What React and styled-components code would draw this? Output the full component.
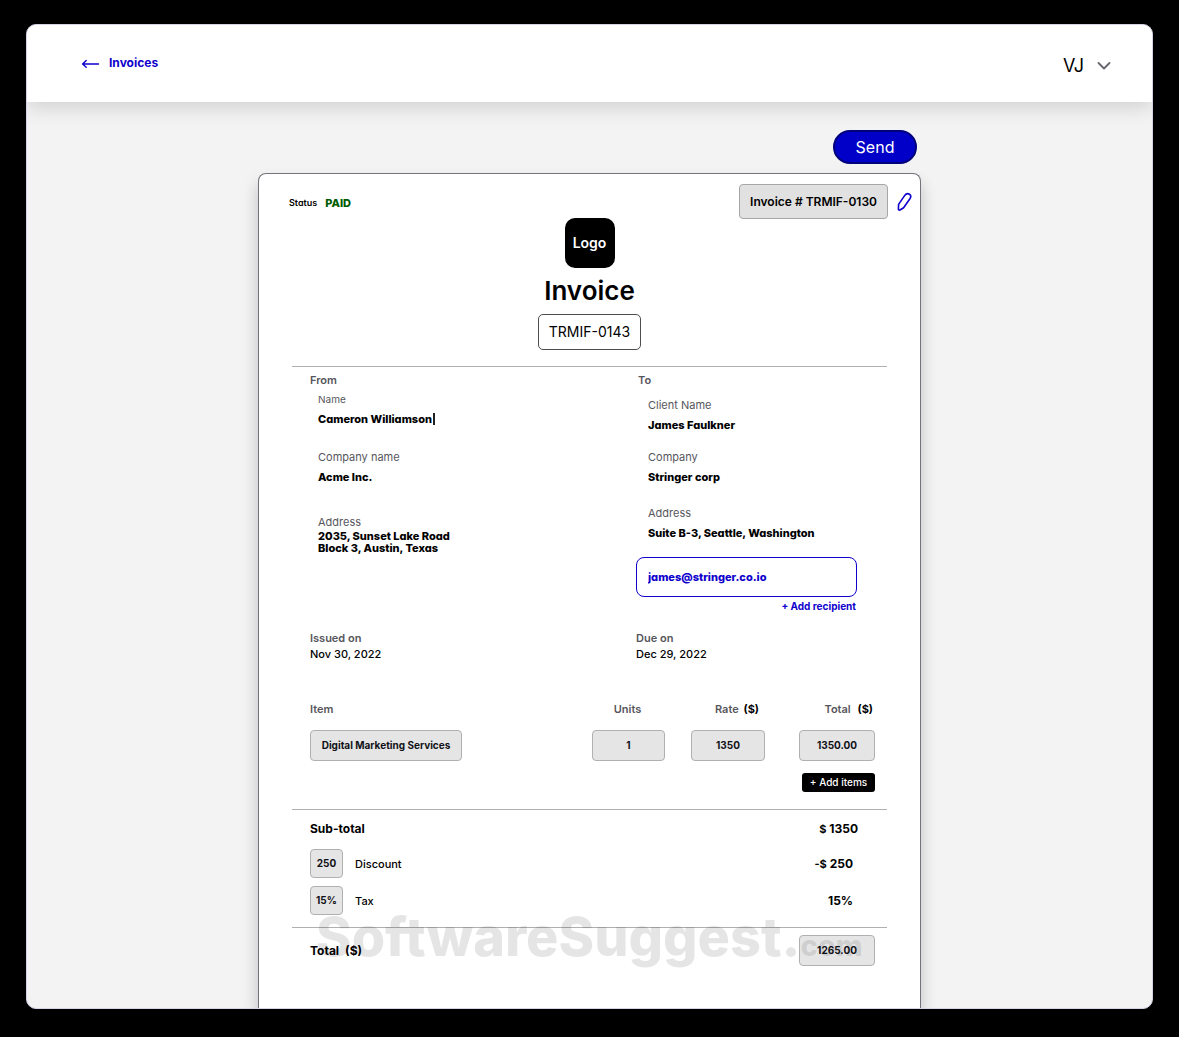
import styled, { createGlobalStyle, css } from "styled-components";

const GlobalStyle = createGlobalStyle`
  * {
    box-sizing: border-box;
  }

  body {
    margin: 0;
    background: #000;
    color: #000;
    font-family: Inter, "Liberation Sans", sans-serif;
    font-size: 11px;
    line-height: 14px;
  }

  button,
  input {
    font-family: inherit;
  }
`;

const blue = "#0f00cc";
const grey = "#56565c";

const Page = styled.div`
  min-height: 100vh;
  display: flex;
  padding: 24px 26px 28px;
`;

const Window = styled.div`
  flex: 1;
  min-width: 0;
  display: flex;
  flex-direction: column;
  overflow: hidden;
  border: 1px solid #d3d3e6;
  border-radius: 10px;
  background: #f3f3f3;
`;

const TopBar = styled.header`
  display: flex;
  align-items: center;
  justify-content: space-between;
  height: 77px;
  padding: 0 40px 0 54px;
  background: #fff;
  box-shadow: 0 4px 20px rgba(0, 0, 0, 0.16);
`;

const BackLink = styled.a`
  display: flex;
  align-items: center;
  gap: 9px;
  padding-bottom: 2px;
  color: ${blue};
  font-size: 12px;
  font-weight: 700;
  text-decoration: none;
`;

const UserMenu = styled.button`
  display: flex;
  align-items: center;
  gap: 12px;
  padding: 4px 0 0;
  border: 0;
  background: none;
  font-size: 18px;
  line-height: 22px;
  color: #000;
`;

const Actions = styled.div`
  display: flex;
  justify-content: flex-end;
  width: 100%;
  max-width: 663px;
  margin: 28px auto 9px;
  padding-right: 4px;
`;

const SendButton = styled.button`
  width: 84px;
  height: 34px;
  border: 2px solid #00007c;
  border-radius: 17px;
  background: #0000c8;
  color: #fff;
  font-size: 16px;
`;

const Sheet = styled.main`
  flex: 1;
  width: 100%;
  max-width: 663px;
  margin: 0 auto;
  border: 1px solid #73737c;
  border-bottom: 0;
  border-radius: 8px 8px 0 0;
  background: #fff;
  box-shadow: 0 10px 16px rgba(0, 0, 0, 0.22);
`;

const SheetTop = styled.div`
  display: flex;
  justify-content: space-between;
  align-items: flex-start;
  height: 44px;
  padding: 10px 8px 0 30px;
`;

const Status = styled.div`
  display: flex;
  gap: 8px;
  padding-top: 12px;
  font-size: 9px;
  font-weight: 600;
  font-feature-settings: "cv11";

  strong {
    color: #005c00;
    font-size: 11px;
    font-weight: 800;
  }
`;

const NumberGroup = styled.div`
  display: flex;
  align-items: center;
  gap: 8px;
`;

const NumberTag = styled.div`
  padding: 9px 10px;
  border: 1px solid #a6a6a6;
  border-radius: 4px;
  background: #e1e1e1;
  font-size: 12px;
  line-height: 15px;
  font-weight: 600;
`;

const IconButton = styled.button`
  display: flex;
  padding: 0;
  border: 0;
  background: none;
`;

const Heading = styled.div`
  display: flex;
  flex-direction: column;
  align-items: center;
  padding-bottom: 16px;
`;

const Logo = styled.div`
  display: grid;
  place-items: center;
  width: 50px;
  height: 50px;
  border-radius: 10px;
  background: #000;
  color: #fff;
  font-size: 14px;
  font-weight: 600;
`;

const Title = styled.h1`
  margin: 0;
  font-size: 26px;
  line-height: 46px;
  font-weight: 600;
`;

const NumberInput = styled.input`
  width: 103px;
  height: 36px;
  padding: 0 0 2px;
  border: 1px solid #4d4d52;
  border-radius: 5px;
  background: #fff;
  text-align: center;
  font-size: 14px;
`;

const Body = styled.div`
  margin: 0 33px;
`;

const Section = styled.section`
  position: relative;
  padding: 6px 12px 0 18px;
  border-top: 1px solid #b0b0b0;
`;

const Columns = styled.div`
  display: grid;
  grid-template-columns: 326fr 239fr;
`;

const Caption = styled.h2`
  margin: 0;
  padding-left: ${(p) => (p.$inset ? "2px" : 0)};
  color: ${grey};
  font-size: 11px;
  line-height: 14px;
  font-weight: 600;
`;

const Party = styled.div`
  padding-left: ${(p) => (p.$to ? "12px" : "8px")};
`;

const Field = styled.div`
  display: flex;
  flex-direction: column;
  gap: ${(p) => (p.$tight ? "1px" : "6px")};
  margin-top: ${(p) => p.$top}px;
`;

const FieldLabel = styled.span`
  color: ${grey};
  ${(p) =>
    p.$clipped &&
    css`
      font-size: 10px;
      clip-path: inset(4px 0 0);
    `}
`;

const FieldValue = styled.span`
  font-weight: 800;
  font-feature-settings: "cv11";
  line-height: ${(p) => (p.$lines ? "12px" : "14px")};
  white-space: pre-line;
`;

const Caret = styled.i`
  display: inline-block;
  width: 2px;
  height: 12px;
  margin-left: 1px;
  background: #222;
  vertical-align: -2px;
`;

const EmailInput = styled.input`
  width: 221px;
  height: 40px;
  margin-top: 17px;
  padding: 0 11px;
  border: 1px solid ${blue};
  border-radius: 8px;
  background: #fff;
  color: ${blue};
  font-size: 11px;
  font-weight: 800;
  font-feature-settings: "cv11";
`;

const AddRecipient = styled.button`
  display: block;
  width: 220px;
  margin-top: 2px;
  padding: 0;
  border: 0;
  background: none;
  color: ${blue};
  text-align: right;
  font-size: 10px;
  line-height: 14px;
  font-weight: 700;
`;

const Dates = styled(Columns)`
  margin-top: 18px;
`;

const DateValue = styled.div`
  margin-top: 2px;
  font-weight: 500;
`;

const Items = styled.table`
  width: 100%;
  margin-top: 41px;
  border-collapse: collapse;
  table-layout: fixed;

  th,
  td {
    padding: 0;
    text-align: left;
  }
`;

const Head = styled.th`
  width: ${(p) => p.$width};
  color: ${grey};
  font-weight: 600;

  div {
    padding: ${(p) => p.$pad || "0"};
    margin-bottom: 14px;
    text-align: ${(p) => p.$align || "left"};
  }

  b {
    margin-left: ${(p) => p.$gap || "2px"};
    color: #000;
    font-weight: 700;
  }
`;

const BoxInput = styled.input`
  display: block;
  width: ${(p) => p.$w}px;
  height: ${(p) => (p.$small ? "29px" : "31px")};
  padding: 0 0 2px;
  border: 1px solid #b0b0b0;
  border-radius: 4px;
  background: #e5e5e5;
  color: #111118;
  text-align: center;
  font-size: 10px;
  font-weight: 700;
`;

const AddItems = styled.button`
  display: block;
  width: 73px;
  height: 19px;
  margin: 12px 0 17px auto;
  padding: 0 0 2px;
  border: 0;
  border-radius: 3px;
  background: #000;
  color: #fff;
  font-size: 10px;
  font-weight: 500;
`;

const SumRow = styled.div`
  display: flex;
  align-items: center;
  margin-top: ${(p) => p.$top || 0}px;
  font-size: ${(p) => (p.$strong ? "12px" : "11px")};
  line-height: 16px;
  font-weight: ${(p) => (p.$strong ? 700 : 500)};

  label {
    margin-left: 12px;
  }
`;

const Amount = styled.span`
  margin-left: auto;
  padding-right: ${(p) => p.$right}px;
  font-size: 12px;
  font-weight: 700;

  small {
    font-size: 11px;
  }
`;

const Currency = styled.span`
  margin-left: 6px;
`;

const Watermark = styled.div`
  position: absolute;
  left: 24px;
  bottom: -10px;
  color: rgba(0, 0, 0, 0.1);
  font-size: 54px;
  line-height: 60px;
  font-weight: 800;
  white-space: nowrap;
  pointer-events: none;

  small {
    font-size: 29px;
  }
`;

const Rest = styled.div`
  height: 42px;
`;

function ArrowLeft() {
  return (
    <svg width="19" height="10" viewBox="0 0 19 10" fill="none" stroke={blue} strokeWidth="1.4">
      <path d="M17.5 6H1.8M5.2 2.5L1.6 6L5.2 9.3" strokeLinecap="round" strokeLinejoin="round" />
    </svg>
  );
}

function ChevronDown() {
  return (
    <svg width="16" height="10" viewBox="0 0 16 10" fill="none" stroke="#66666c" strokeWidth="1.8">
      <path d="M2.5 2L8 7.5L13.5 2" strokeLinecap="round" strokeLinejoin="round" />
    </svg>
  );
}

function Pen() {
  return (
    <svg width="16" height="20" viewBox="0 0 16 20" fill="none" stroke={blue} strokeWidth="1.6">
      <path
        d="M2.4 16.8L2.6 12.4L8.6 3.6C9.8 1.9 11.8 1.2 13.4 2.2C15 3.3 15 5.2 13.9 6.8L7.6 15.8L4 18Q2.3 18.4 2.4 16.8Z"
        strokeLinejoin="round"
      />
    </svg>
  );
}

export default function App() {
  return (
    <>
      <GlobalStyle />
      <Page>
        <Window>
          <TopBar>
            <BackLink href="#invoices">
              <ArrowLeft />
              Invoices
            </BackLink>
            <UserMenu type="button">
              VJ
              <ChevronDown />
            </UserMenu>
          </TopBar>

          <Actions>
            <SendButton type="button">Send</SendButton>
          </Actions>

          <Sheet>
            <SheetTop>
              <Status>
                Status <strong>PAID</strong>
              </Status>
              <NumberGroup>
                <NumberTag>Invoice # TRMIF-0130</NumberTag>
                <IconButton type="button" aria-label="Edit invoice number">
                  <Pen />
                </IconButton>
              </NumberGroup>
            </SheetTop>

            <Heading>
              <Logo>Logo</Logo>
              <Title>Invoice</Title>
              <NumberInput aria-label="Invoice number" defaultValue="TRMIF-0143" />
            </Heading>

            <Body>
              <Section>
                <Columns>
                  <div>
                    <Caption>From</Caption>
                    <Party>
                      <Field $top={5}>
                        <FieldLabel $clipped>Name</FieldLabel>
                        <FieldValue>
                          Cameron Williamson
                          <Caret />
                        </FieldValue>
                      </Field>
                      <Field $top={24}>
                        <FieldLabel>Company name</FieldLabel>
                        <FieldValue>Acme Inc.</FieldValue>
                      </Field>
                      <Field $top={31} $tight>
                        <FieldLabel>Address</FieldLabel>
                        <FieldValue $lines>{"2035, Sunset Lake Road\nBlock 3, Austin, Texas"}</FieldValue>
                      </Field>
                    </Party>
                  </div>
                  <div>
                    <Caption $inset>To</Caption>
                    <Party $to>
                      <Field $top={11}>
                        <FieldLabel>Client Name</FieldLabel>
                        <FieldValue>James Faulkner</FieldValue>
                      </Field>
                      <Field $top={18}>
                        <FieldLabel>Company</FieldLabel>
                        <FieldValue>Stringer corp</FieldValue>
                      </Field>
                      <Field $top={22}>
                        <FieldLabel>Address</FieldLabel>
                        <FieldValue>Suite B-3, Seattle, Washington</FieldValue>
                      </Field>
                    </Party>
                    <EmailInput type="email" aria-label="Recipient email" defaultValue="james@stringer.co.io" />
                    <AddRecipient type="button">+ Add recipient</AddRecipient>
                  </div>
                </Columns>

                <Dates>
                  <div>
                    <Caption>Issued on</Caption>
                    <DateValue>Nov 30, 2022</DateValue>
                  </div>
                  <div>
                    <Caption>Due on</Caption>
                    <DateValue>Dec 29, 2022</DateValue>
                  </div>
                </Dates>

                <Items>
                  <thead>
                    <tr>
                      <Head>
                        <div>Item</div>
                      </Head>
                      <Head $width="99px" $align="center" $pad="0 28px 0 0">
                        <div>Units</div>
                      </Head>
                      <Head $width="108px" $align="right" $pad="0 40px 0 0">
                        <div>
                          Rate <b>($)</b>
                        </div>
                      </Head>
                      <Head $width="76px" $align="right" $pad="0 2px 0 0" $gap="4px">
                        <div>
                          Total <b>($)</b>
                        </div>
                      </Head>
                    </tr>
                  </thead>
                  <tbody>
                    <tr>
                      <td>
                        <BoxInput $w={152} aria-label="Item" defaultValue="Digital Marketing Services" />
                      </td>
                      <td>
                        <BoxInput $w={73} aria-label="Units" defaultValue="1" />
                      </td>
                      <td>
                        <BoxInput $w={74} aria-label="Rate" defaultValue="1350" />
                      </td>
                      <td>
                        <BoxInput $w={76} aria-label="Item total" defaultValue="1350.00" />
                      </td>
                    </tr>
                  </tbody>
                </Items>
                <AddItems type="button">+ Add items</AddItems>
              </Section>

              <Section>
                <SumRow $top={5} $strong>
                  Sub-total
                  <Amount $right={17}>
                    <small>$</small> 1350
                  </Amount>
                </SumRow>
                <SumRow $top={12}>
                  <BoxInput $small $w={33} id="discount" defaultValue="250" />
                  <label htmlFor="discount">Discount</label>
                  <Amount $right={22}>
                    <small>-$</small> 250
                  </Amount>
                </SumRow>
                <SumRow $top={8}>
                  <BoxInput $small $w={33} id="tax" defaultValue="15%" />
                  <label htmlFor="tax">Tax</label>
                  <Amount $right={22}>15%</Amount>
                </SumRow>
                <SumRow $top={12} />
              </Section>

              <Section>
                <SumRow $top={1} $strong>
                  Total <Currency>($)</Currency>
                  <Amount $right={0}>
                    <BoxInput $w={76} aria-label="Invoice total" defaultValue="1265.00" />
                  </Amount>
                </SumRow>
                <Watermark>
                  SoftwareSuggest.<small>com</small>
                </Watermark>
              </Section>
              <Rest />
            </Body>
          </Sheet>
        </Window>
      </Page>
    </>
  );
}
